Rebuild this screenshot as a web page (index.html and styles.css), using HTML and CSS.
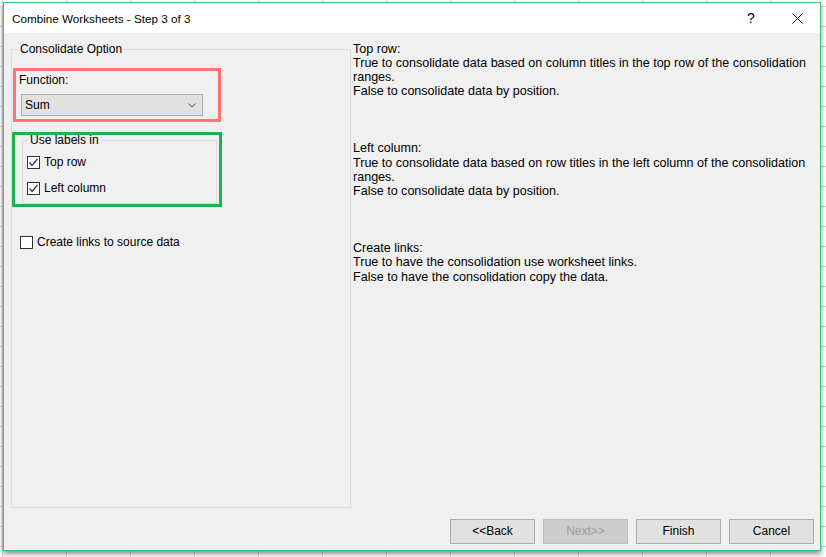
FILE: index.html
```html
<!DOCTYPE html>
<html lang="en">
<head>
    <meta charset="UTF-8">
    <title>Combine Worksheets - Step 3 of 3</title>
    <link rel="stylesheet" href="styles.css">
</head>
<body>
    <div class="desktop">
        <div class="dialog">
            <div class="titlebar">
                <span class="title">Combine Worksheets - Step 3 of 3</span>
                <span class="win-btn help-btn">?</span>
                <span class="win-btn close-btn">
                    <svg width="11" height="11" viewBox="0 0 11 11">
                        <path d="M0.5 0.5 L10.5 10.5 M10.5 0.5 L0.5 10.5" stroke="#000" stroke-width="1" fill="none"/>
                    </svg>
                </span>
            </div>

            <div class="body">
                <div class="content">
                    <fieldset class="group">
                        <legend>Consolidate Option</legend>

                        <div class="mark mark-red">
                            <div class="label">Function:</div>
                            <div class="select">
                                <span>Sum</span>
                                <svg width="8" height="5" viewBox="0 0 8 5">
                                    <path d="M0.5 0.5 L4 4 L7.5 0.5" stroke="#555" stroke-width="1" fill="none"/>
                                </svg>
                            </div>
                        </div>

                        <div class="mark mark-green">
                            <fieldset class="group inner">
                                <legend>Use labels in</legend>
                                <label class="check">
                                    <span class="box">
                                        <svg width="11" height="11" viewBox="0 0 11 11">
                                            <path d="M1.5 5.5 L4 8.5 L9.5 2" stroke="#333" stroke-width="1.2" fill="none"/>
                                        </svg>
                                    </span>
                                    Top row
                                </label>
                                <label class="check">
                                    <span class="box">
                                        <svg width="11" height="11" viewBox="0 0 11 11">
                                            <path d="M1.5 5.5 L4 8.5 L9.5 2" stroke="#333" stroke-width="1.2" fill="none"/>
                                        </svg>
                                    </span>
                                    Left column
                                </label>
                            </fieldset>
                        </div>

                        <label class="check links">
                            <span class="box"></span>
                            Create links to source data
                        </label>
                    </fieldset>

                    <div class="help">
                        <p>Top row:<br>
                        True to consolidate data based on column titles in the top row of the consolidation ranges.<br>
                        False to consolidate data by position.</p>
                        <p>Left column:<br>
                        True to consolidate data based on row titles in the left column of the consolidation ranges.<br>
                        False to consolidate data by position.</p>
                        <p>Create links:<br>
                        True to have the consolidation use worksheet links.<br>
                        False to have the consolidation copy the data.</p>
                    </div>
                </div>

                <div class="buttons">
                    <button class="btn">&lt;&lt;Back</button>
                    <button class="btn" disabled>Next&gt;&gt;</button>
                    <button class="btn">Finish</button>
                    <button class="btn">Cancel</button>
                </div>
            </div>
        </div>
    </div>
</body>
</html>
```

FILE: styles.css
```css
body {
    margin: 0;
    font-family: "Liberation Sans", Arial, sans-serif;
    font-size: 12px;
    color: #000;
    background: #fff;
}

/* spreadsheet behind the dialog */
.desktop {
    width: 826px;
    height: 557px;
    box-sizing: border-box;
    padding: 2px 0 0 3px;
    overflow: hidden;
    background-color: #fff;
    background-image:
        linear-gradient(to right, #d4d4d4 1px, transparent 1px),
        linear-gradient(to bottom, #d4d4d4 1px, transparent 1px);
    background-size: 64px 20px;
    background-position: 2px 6px;
}

.dialog {
    width: 818px;
    height: 549px;
    box-sizing: border-box;
    border: 1px solid #3cc47c;
    background: #f0f0f0;
    display: flex;
    flex-direction: column;
    box-shadow: 0 3px 5px rgba(0, 0, 0, 0.45);
}

.titlebar {
    height: 30px;
    flex: none;
    background: #fff;
    display: flex;
    align-items: center;
    padding-left: 8px;
}

.title {
    flex: 1;
    font-size: 11.7px;
}

.win-btn {
    width: 46px;
    height: 30px;
    display: flex;
    align-items: center;
    justify-content: center;
}

.help-btn {
    font-size: 14px;
}

.body {
    flex: 1;
    display: flex;
    flex-direction: column;
    padding: 8px 6px 6px 7px;
}

.content {
    flex: 1;
    display: flex;
}

.group {
    margin: 0;
    width: 340px;
    flex: none;
    min-width: 0;
    box-sizing: border-box;
    border: 1px solid #dcdcdc;
    padding: 11px 0 0 1px;
}

.group legend {
    margin-left: 5px;
    padding: 0 2px;
    line-height: 16px;
}

.mark {
    box-sizing: border-box;
    border-style: solid;
    border-width: 3px;
}

.mark-red {
    width: 208px;
    border-color: #ff7474;
    padding: 1px 0 3px 3px;
}

.label {
    line-height: 16px;
}

.select {
    margin: 6px 0 0 2px;
    width: 182px;
    height: 22px;
    box-sizing: border-box;
    border: 1px solid #adadad;
    background: #e1e1e1;
    display: flex;
    align-items: center;
    justify-content: space-between;
    padding: 0 6px 0 3px;
}

.mark-green {
    width: 210px;
    margin: 10px 0 0 -1px;
    border-color: #22b14c;
    padding: 0 2px 0 7px;
}

.group.inner {
    width: auto;
    padding: 9px 0 7px 4px;
}

.group.inner legend {
    margin-left: 1px;
    line-height: 10px;
}

.check {
    display: flex;
    align-items: center;
    height: 16px;
}

.check + .check {
    margin-top: 10px;
}

.box {
    width: 13px;
    height: 13px;
    box-sizing: border-box;
    border: 1px solid #333;
    background: #fff;
    margin-right: 4px;
    display: flex;
    align-items: center;
    justify-content: center;
}

.links {
    margin: 27px 0 0 7px;
}

.help {
    flex: 1;
    margin: 0.5px 0 0 2px;
    font-size: 12.55px;
    line-height: 14.3px;
}

.help p {
    margin: 0 0 42.6px;
}

.buttons {
    display: flex;
    justify-content: flex-end;
    gap: 8px;
    margin-top: 11px;
}

.btn {
    width: 85px;
    height: 25px;
    border: 1px solid #adadad;
    background: #e1e1e1;
    font: inherit;
    color: #000;
    padding: 0 0 1px;
}

.btn:disabled {
    background: #cccccc;
    border-color: #bfbfbf;
    color: #a0a0a0;
}
```
